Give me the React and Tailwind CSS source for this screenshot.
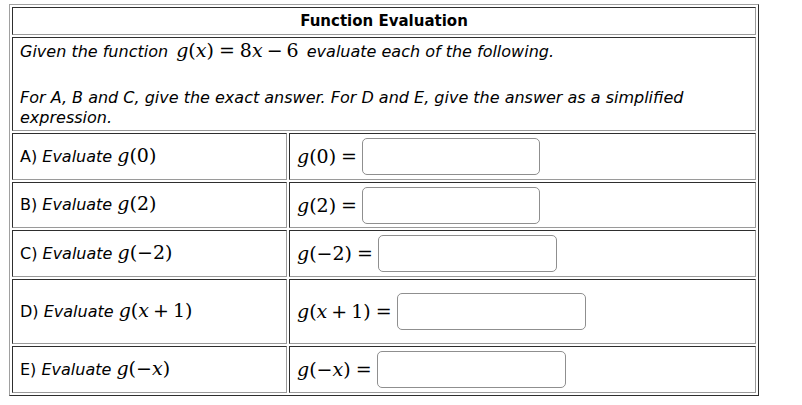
import React from "react";

const SANS = { fontFamily: '"DejaVu Sans", "Liberation Sans", sans-serif' };

function M({ children }) {
  return (
    <span
      className="text-[19px] leading-none whitespace-nowrap not-italic"
      style={{ fontFamily: '"DejaVu Serif", "Liberation Serif", serif' }}
    >
      {children}
    </span>
  );
}
const I = ({ children }) => <span className="italic">{children}</span>;
const Eq = () => <span className="mx-[5px]">=</span>;
const Bin = ({ c }) => <span className="mx-[4px]">{c}</span>;

const cellBorder =
  "border border-t-[#2e2e2e] border-l-[#2e2e2e] border-b-[#9a9a9a] border-r-[#9a9a9a] p-0 ";

function Input({ w }) {
  return (
    <span
      className="block h-[37px] rounded-[5px] border border-[#8f8f8f] bg-white"
      style={{ width: w }}
    />
  );
}

const rows = [
  { l: "A)", m: <><I>g</I>(0)</>, w: 178, h: "h-[47px]" },
  { l: "B)", m: <><I>g</I>(2)</>, w: 178, h: "h-[46px]" },
  { l: "C)", m: <><I>g</I>(−2)</>, w: 179, h: "h-[47px]" },
  { l: "D)", m: <><I>g</I>(<I>x</I><Bin c="+" />1)</>, w: 189, h: "h-[65px]" },
  { l: "E)", m: <><I>g</I>(−<I>x</I>)</>, w: 189, h: "h-[47px]" },
];

export default function App() {
  return (
    <div className="bg-white w-[802px] h-[405px] pt-[4px] pl-[9px] text-black" style={SANS}>
      <table className="w-[750px] border-separate border-spacing-[2px] border border-t-[#a0a0a0] border-l-[#a0a0a0] border-b-[#2e2e2e] border-r-[#2e2e2e] text-[16px] table-fixed">
        <colgroup>
          <col className="w-[275px]" />
          <col className="w-[467px]" />
        </colgroup>
        <tbody>
          <tr>
            <td colSpan={2} className={cellBorder + "h-[28px] text-center align-middle font-bold text-[15px]"}>
              Function Evaluation
            </td>
          </tr>
          <tr>
            <td colSpan={2} className={cellBorder + "h-[94px] pl-[7px] align-top italic"}>
              <div className="leading-[22px] mt-[3px]">
                Given the function{" "}
                <M>
                  <span className="ml-[3px]" />
                  <I>g</I>(<I>x</I>)<Eq />8<I>x</I><Bin c="−" />6
                  <span className="mr-[3px]" />
                </M>{" "}
                evaluate each of the following.
              </div>
              <div className="leading-[20px] mt-[25px]">
                For A, B and C, give the exact answer. For D and E, give the answer as a simplified expression.
              </div>
            </td>
          </tr>
          {rows.map((r) => (
            <tr key={r.l}>
              <td className={cellBorder + r.h + " pl-[7px] align-middle"}>
                <span>{r.l} </span>
                <span className="italic">Evaluate </span>
                <M>{r.m}</M>
              </td>
              <td className={cellBorder + "pl-[7px] align-middle"}>
                <div className="flex items-center">
                  <M>
                    {r.m}
                    <Eq />
                  </M>
                  <Input w={r.w} />
                </div>
              </td>
            </tr>
          ))}
        </tbody>
      </table>
    </div>
  );
}
